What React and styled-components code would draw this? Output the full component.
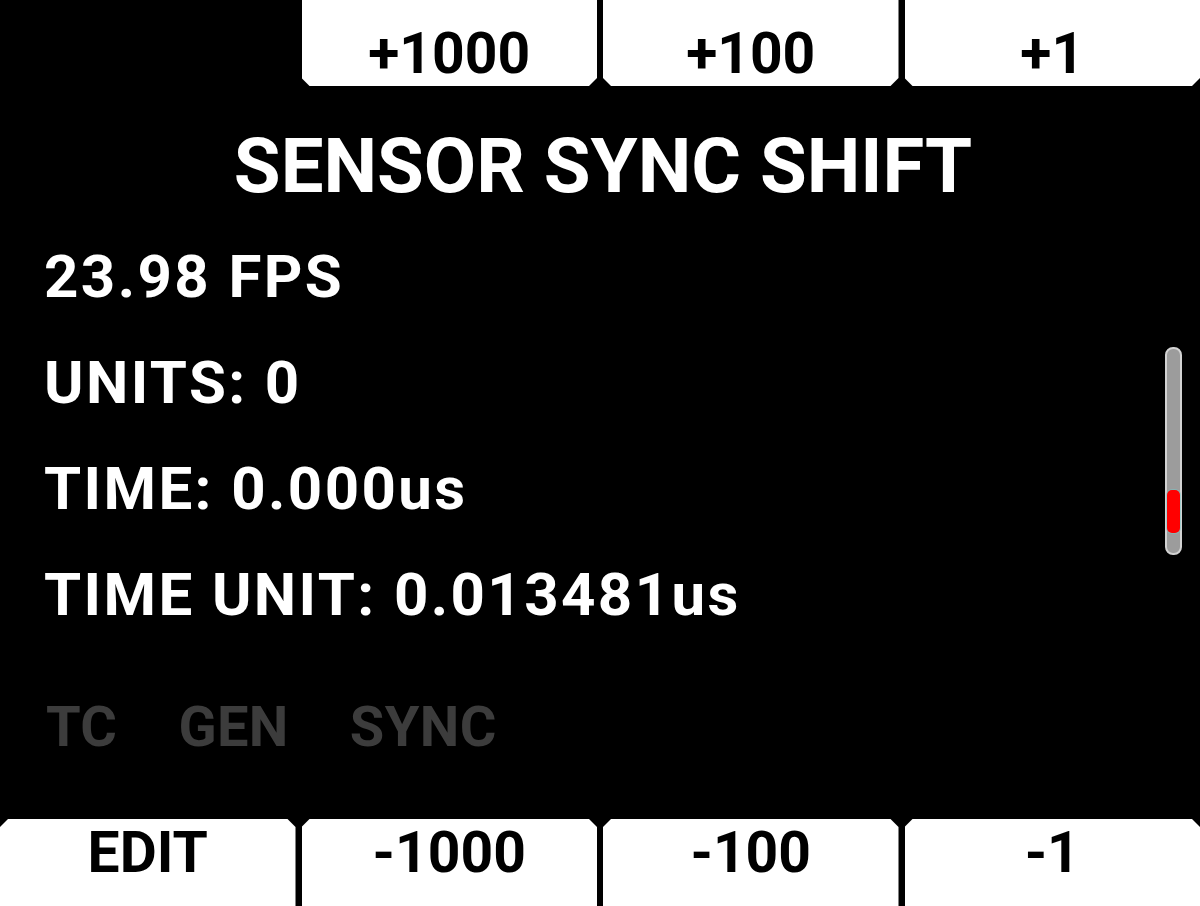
import React from 'react';
import styled, { createGlobalStyle } from 'styled-components';

const Global = createGlobalStyle`
  html, body {
    margin: 0;
    padding: 0;
    background: #000;
    overflow: hidden;
  }
  * { box-sizing: border-box; }
`;

const topKeys = ['', '+1000', '+100', '+1'];
const bottomKeys = ['EDIT', '-1000', '-100', '-1'];
const info = ['23.98 FPS', 'UNITS: 0', 'TIME: 0.000us', 'TIME UNIT: 0.013481us'];
const modes = ['TC', 'GEN', 'SYNC'];

const App = () => {
    return (
        <>
            <Global />
            <Screen>
                <KeyBar>
                    {topKeys.map((k, i) => (
                        <Key key={i} $edge="top" $blank={!k}>{k}</Key>
                    ))}
                </KeyBar>
                <Title>SENSOR SYNC SHIFT</Title>
                <Body>
                    <InfoList>
                        {info.map((t) => (
                            <InfoLine key={t}>{t}</InfoLine>
                        ))}
                    </InfoList>
                    <Track>
                        <Thumb />
                    </Track>
                </Body>
                <Modes>
                    {modes.map((m) => (
                        <Mode key={m}>{m}</Mode>
                    ))}
                </Modes>
                <KeyBar $bottom>
                    {bottomKeys.map((k, i) => (
                        <Key key={i} $edge="bottom">{k}</Key>
                    ))}
                </KeyBar>
            </Screen>
        </>
    );
};

const Screen = styled.div`
    width: 1200px;
    height: 906px;
    background: #000;
    color: #fff;
    font-family: Roboto, "Liberation Sans", sans-serif;
    font-weight: 700;
    display: flex;
    flex-direction: column;
`;

const KeyBar = styled.div`
    display: grid;
    grid-template-columns: repeat(4, 1fr);
    column-gap: 6px;
    height: ${(p) => (p.$bottom ? '87px' : '86px')};
    margin-top: ${(p) => (p.$bottom ? 'auto' : '0')};
`;

const Key = styled.div`
    display: flex;
    align-items: center;
    justify-content: center;
    background: ${(p) => (p.$blank ? 'transparent' : '#fff')};
    color: #000;
    font-size: 57px;
    line-height: 57px;
    padding-top: ${(p) => (p.$edge === 'top' ? '20px' : '0')};
    padding-bottom: ${(p) => (p.$edge === 'bottom' ? '21px' : '0')};
    clip-path: ${(p) =>
        p.$edge === 'top'
            ? 'polygon(0 0, 100% 0, 100% calc(100% - 8px), calc(100% - 8px) 100%, 8px 100%, 0 calc(100% - 8px))'
            : 'polygon(8px 0, calc(100% - 8px) 0, 100% 8px, 100% 100%, 0 100%, 0 8px)'};
`;

const Title = styled.h1`
    margin: 42px 0 0 6px;
    font-size: 76px;
    line-height: 76px;
    font-weight: 700;
    text-align: center;
`;

const Body = styled.div`
    display: flex;
    align-items: flex-start;
    margin-top: 20px;
`;

const InfoList = styled.div`
    flex: 1;
    padding-left: 44px;
`;

const InfoLine = styled.div`
    font-size: 60px;
    line-height: 106px;
    letter-spacing: 2.4px;
`;

const Track = styled.div`
    width: 17px;
    height: 208px;
    margin: 123px 18px 0 0;
    background: #9c9c9c;
    border: 2px solid #d2d2d2;
    border-radius: 8px;
    display: flex;
    flex-direction: column;
`;

const Thumb = styled.div`
    margin-top: 141px;
    height: 43px;
    background: #ff0000;
    border-radius: 5px;
    box-shadow: 0 0 0 1px rgba(120, 200, 200, 0.55);
`;

const Modes = styled.div`
    display: flex;
    gap: 61px;
    padding-left: 46px;
    margin-top: 51px;
`;

const Mode = styled.span`
    font-size: 56px;
    line-height: 56px;
    letter-spacing: 0.4px;
    color: #3c3c3c;
`;

export default App;
